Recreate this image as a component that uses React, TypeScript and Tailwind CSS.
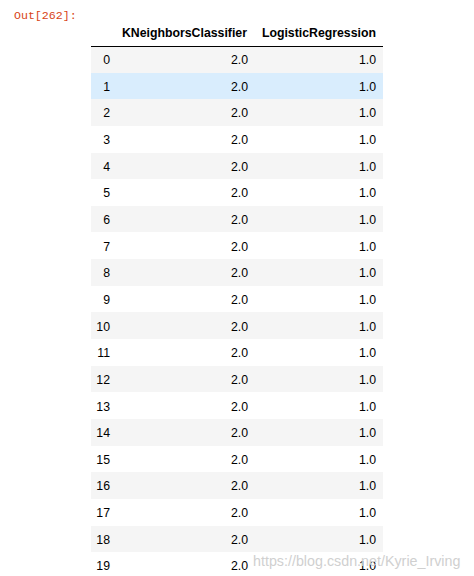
const rows = Array.from({ length: 20 }, (_, i) => ({ idx: i, knn: "2.0", lr: "1.0" }));

const App = () => {
  return (
    <div className="relative w-[474px] h-[576px] overflow-hidden bg-white text-black">
      <div className="flex">
        {/* prompt */}
        <div className="w-[91px] shrink-0 pl-[14px] pt-[9px]">
          <div
            className="text-[11.6px] leading-[14px] text-[#d84315]"
            style={{ fontFamily: '"Liberation Mono", monospace' }}
          >
            Out[262]:
          </div>
        </div>

        <div className="pt-[21px]">
          <table
            className="border-collapse text-[12.3px] leading-none"
            style={{ fontFamily: '"Liberation Sans", Arial, sans-serif' }}
          >
            <thead>
              <tr className="h-[25px] border-b border-black">
                <th className="w-[25px] p-0"></th>
                <th className="w-[138px] pr-[7px] text-right font-bold">KNeighborsClassifier</th>
                <th className="w-[129px] pr-[7px] text-right font-bold">LogisticRegression</th>
              </tr>
            </thead>
            <tbody>
              {rows.map((r) => (
                <tr
                  key={r.idx}
                  className={
                    "h-[26.65px] " +
                    (r.idx === 1 ? "bg-[#d9edfd]" : r.idx % 2 === 0 ? "bg-[#f5f5f5]" : "bg-white")
                  }
                >
                  <td className="pr-[6px] pt-[2px] text-right">{r.idx}</td>
                  <td className="pr-[6px] pt-[2px] text-right">{r.knn}</td>
                  <td className="pr-[7px] pt-[2px] text-right">{r.lr}</td>
                </tr>
              ))}
            </tbody>
          </table>
        </div>
      </div>

      {/* watermark */}
      <div
        className="absolute left-[253px] top-[552px] text-[14.3px] leading-[18px] text-[#d0d0d0]"
        style={{ fontFamily: '"Liberation Sans", Arial, sans-serif' }}
      >
        https://blog.csdn.net/Kyrie_Irving
      </div>
    </div>
  );
};

export default App;
